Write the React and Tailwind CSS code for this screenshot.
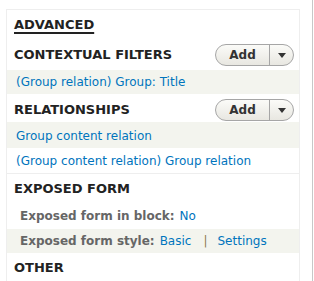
import React from "react";

function AddButton() {
  return (
    <div className="flex h-[22px] w-[79px] items-stretch rounded-full border border-[#a6a6a6] bg-gradient-to-b from-[#fbfbf8] to-[#e8e7e1] text-[12px] font-bold normal-case text-[#333]">
      <span className="flex w-[53px] items-center justify-center">Add</span>
      <span className="flex flex-1 items-center justify-center border-l border-[#a6a6a6]">
        <svg width="8" height="5" viewBox="0 0 8 5">
          <path d="M0 0 H8 L4 5 Z" fill="#333" />
        </svg>
      </span>
    </div>
  );
}

function Heading({ children, className = "" }) {
  return (
    <div className={`flex items-center justify-between pl-[7px] pr-[5px] text-[13px] font-bold uppercase text-[#222] ${className}`}>
      {children}
    </div>
  );
}

function Row({ striped, children, className = "" }) {
  return (
    <div className={`flex items-center pl-[9px] text-[12px] text-[#0074bd] ${striped ? "bg-[#f3f4ee]" : ""} ${className}`}>
      {children}
    </div>
  );
}

export default function App() {
  return (
    <div className="h-[281px] w-[313px] overflow-hidden border-r border-[#c8c8c8] bg-white font-['DejaVu_Sans',sans-serif]">
      <div className="ml-[6px] mt-[9px] w-[294px] border border-[#eeeeee] pb-4">
        <Heading className="h-[29px]">
          <span className="underline decoration-[1.5px] underline-offset-[3px]">Advanced</span>
        </Heading>

        {/* Contextual filters */}
        <Heading className="h-[31px] pt-[1px]">
          <span>Contextual filters</span>
          <AddButton />
        </Heading>
        <Row striped className="h-[24px]">(Group relation) Group: Title</Row>

        {/* Relationships */}
        <Heading className="h-[28px] pt-[5px] pb-[1px]">
          <span>Relationships</span>
          <AddButton />
        </Heading>
        <Row striped className="h-[26px] pt-[2px]">Group content relation</Row>
        <Row className="h-[26px] border-b border-[#eeeeee]">(Group content relation) Group relation</Row>

        {/* Exposed form */}
        <Heading className="h-[29px]">
          <span>Exposed form</span>
        </Heading>
        <div className="flex h-[26px] items-center pl-[13px] text-[12px]">
          <span className="font-bold text-[#666]">Exposed form in block:</span>
          <span className="ml-[5px] text-[#0074bd]">No</span>
        </div>
        <div className="flex h-[24px] items-center bg-[#f3f4ee] pl-[13px] text-[12px]">
          <span className="font-bold text-[#666]">Exposed form style:</span>
          <span className="ml-[5px] text-[#0074bd]">Basic</span>
          <span className="pl-[12px] pr-[10px] text-[#8c7853]">|</span>
          <span className="text-[#0074bd]">Settings</span>
        </div>

        {/* Other */}
        <Heading className="h-[30px]">
          <span>Other</span>
        </Heading>
      </div>
    </div>
  );
}
